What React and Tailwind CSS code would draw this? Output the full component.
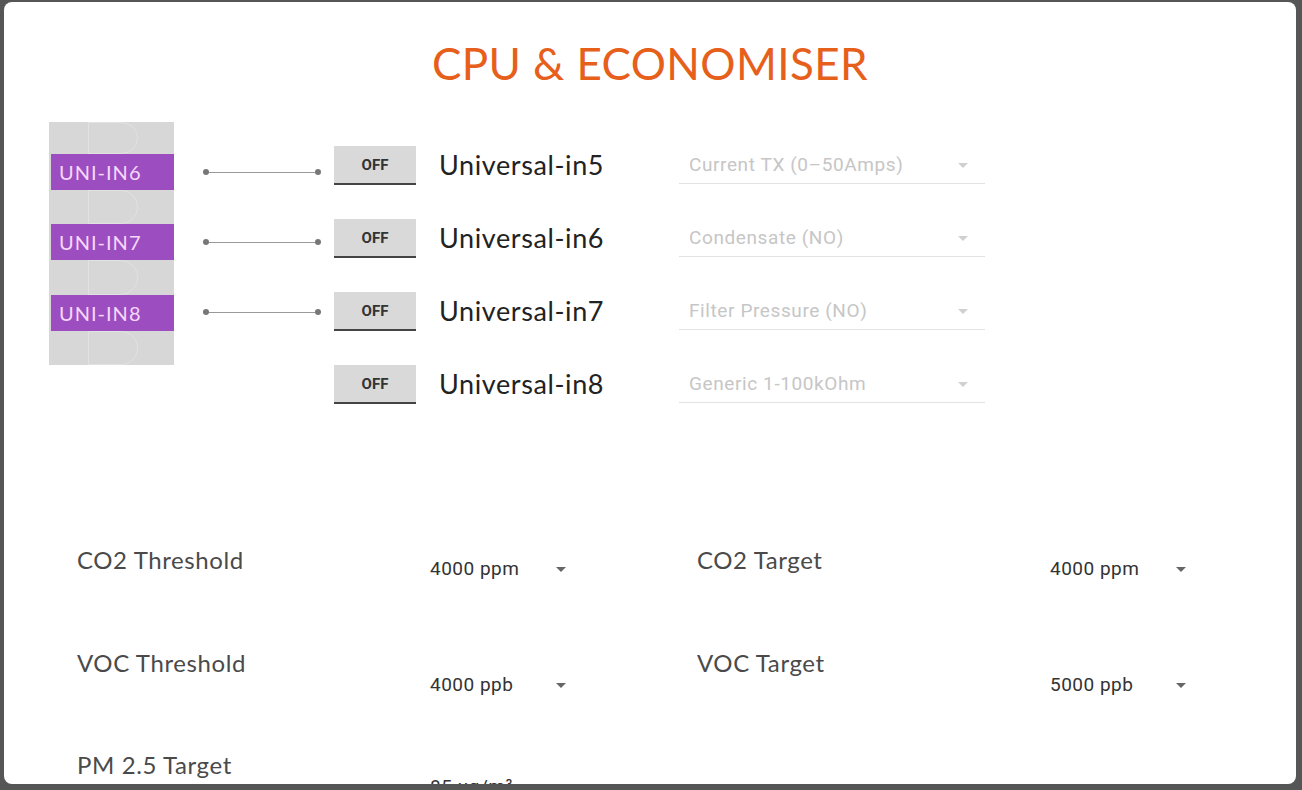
import React from 'react';

const inputs = [
  { name: 'Universal-in5', type: 'Current TX (0–50Amps)' },
  { name: 'Universal-in6', type: 'Condensate (NO)' },
  { name: 'Universal-in7', type: 'Filter Pressure (NO)' },
  { name: 'Universal-in8', type: 'Generic 1-100kOhm' },
];

const pins = ['UNI-IN6', 'UNI-IN7', 'UNI-IN8'];

const Caret = ({ className }) => (
  <svg width="10" height="5" viewBox="0 0 10 5" className={className}>
    <path d="M0 0 L10 0 L5 5 Z" fill="currentColor" />
  </svg>
);

// faint connector outline inside the grey strip
const Slot = ({ h }) => (
  <div className="flex" style={{ height: h }}>
    <div className="ml-[39px] w-[50px] h-full border border-[#e2e2e2] rounded-r-[18px]" />
  </div>
);

const Setting = ({ label, value, offset }) => (
  <div className="flex w-[620px] shrink-0">
    <div
      className="w-[353px] text-[24px] leading-[28px] tracking-[0.6px] text-[#4a4a4a]"
      style={{ fontFamily: 'Lato, sans-serif' }}
    >
      {label}
    </div>
    <div className="flex items-center h-[28px]" style={{ marginTop: offset }}>
      <span
        className="w-[126px] text-[19px] tracking-[0.5px] text-[#333]"
        style={{ fontFamily: 'Roboto, sans-serif' }}
      >
        {value}
      </span>
      <Caret className="text-[#666]" />
    </div>
  </div>
);

export default function App() {
  return (
    <div className="w-[1302px] h-[790px] bg-[#565656] pt-[2px] pl-[4px] pr-[6px] pb-[6px]">
      <div className="w-full h-full bg-white rounded-lg overflow-hidden">
        {/* Title */}
        <h1
          className="mt-[36px] h-[50px] leading-[50px] text-center text-[44px] tracking-[0.4px] text-[#e6601c]"
          style={{ fontFamily: 'Lato, sans-serif' }}
        >
          CPU &amp; ECONOMISER
        </h1>

        {/* Wiring section */}
        <div className="flex mt-[34px] pl-[45px]">
          {/* Connector panel */}
          <div className="w-[125px] h-[243px] bg-[#d7d7d7] flex flex-col">
            <Slot h={32} />
            {pins.map((p, i) => (
              <React.Fragment key={p}>
                <div
                  className="ml-[2px] h-[36px] bg-[#9c4ec0] flex items-center pl-[8px] text-[20px] tracking-[1px] text-[#f6d8fb]"
                  style={{ fontFamily: 'Lato, sans-serif' }}
                >
                  {p}
                </div>
                <Slot h={i === 1 ? 35 : 34} />
              </React.Fragment>
            ))}
          </div>

          {/* Wires */}
          <div className="ml-[29px] w-[118px] flex flex-col pt-[32px] gap-[34px]">
            {pins.map((p) => (
              <div key={p} className="h-[36px] flex items-center">
                <span className="w-[6px] h-[6px] rounded-full bg-[#777]" />
                <span className="flex-1 h-px bg-[#999]" />
                <span className="w-[6px] h-[6px] rounded-full bg-[#777]" />
              </div>
            ))}
          </div>

          {/* Inputs */}
          <div className="ml-[13px] pt-[24px] flex flex-col gap-[34px]">
            {inputs.map((inp) => (
              <div key={inp.name} className="flex items-center h-[39px]">
                <button
                  className="w-[82px] h-[39px] bg-[#d9d9d9] border-b-2 border-[#444] text-[15px] font-bold text-[#333] pt-[1px]"
                  style={{ fontFamily: 'Roboto, sans-serif' }}
                >
                  OFF
                </button>
                <span
                  className="ml-[23px] w-[240px] text-[27px] tracking-[0.6px] text-[#222]"
                  style={{ fontFamily: 'Lato, sans-serif' }}
                >
                  {inp.name}
                </span>
                <div className="w-[306px] h-[39px] flex items-center pl-[10px] pr-[17px] pt-[3px] border-b border-[#e3e3e3] translate-y-[-1px]">
                  <span
                    className="flex-1 text-[19px] tracking-[0.6px] text-[#c6c6c6]"
                    style={{ fontFamily: 'Roboto, sans-serif' }}
                  >
                    {inp.type}
                  </span>
                  <Caret className="text-[#d0d0d0]" />
                </div>
              </div>
            ))}
          </div>
        </div>

        {/* Thresholds */}
        <div className="mt-[142px] pl-[73px] flex flex-col">
          <div className="flex h-[103px]">
            <Setting label="CO2 Threshold" value="4000 ppm" offset={9} />
            <Setting label="CO2 Target" value="4000 ppm" offset={9} />
          </div>
          <div className="flex h-[102px]">
            <Setting label="VOC Threshold" value="4000 ppb" offset={22} />
            <Setting label="VOC Target" value="5000 ppb" offset={22} />
          </div>
          <div className="flex h-[60px]">
            <Setting label="PM 2.5 Target" value="85 µg/m³" offset={22} />
          </div>
        </div>
      </div>
    </div>
  );
}
